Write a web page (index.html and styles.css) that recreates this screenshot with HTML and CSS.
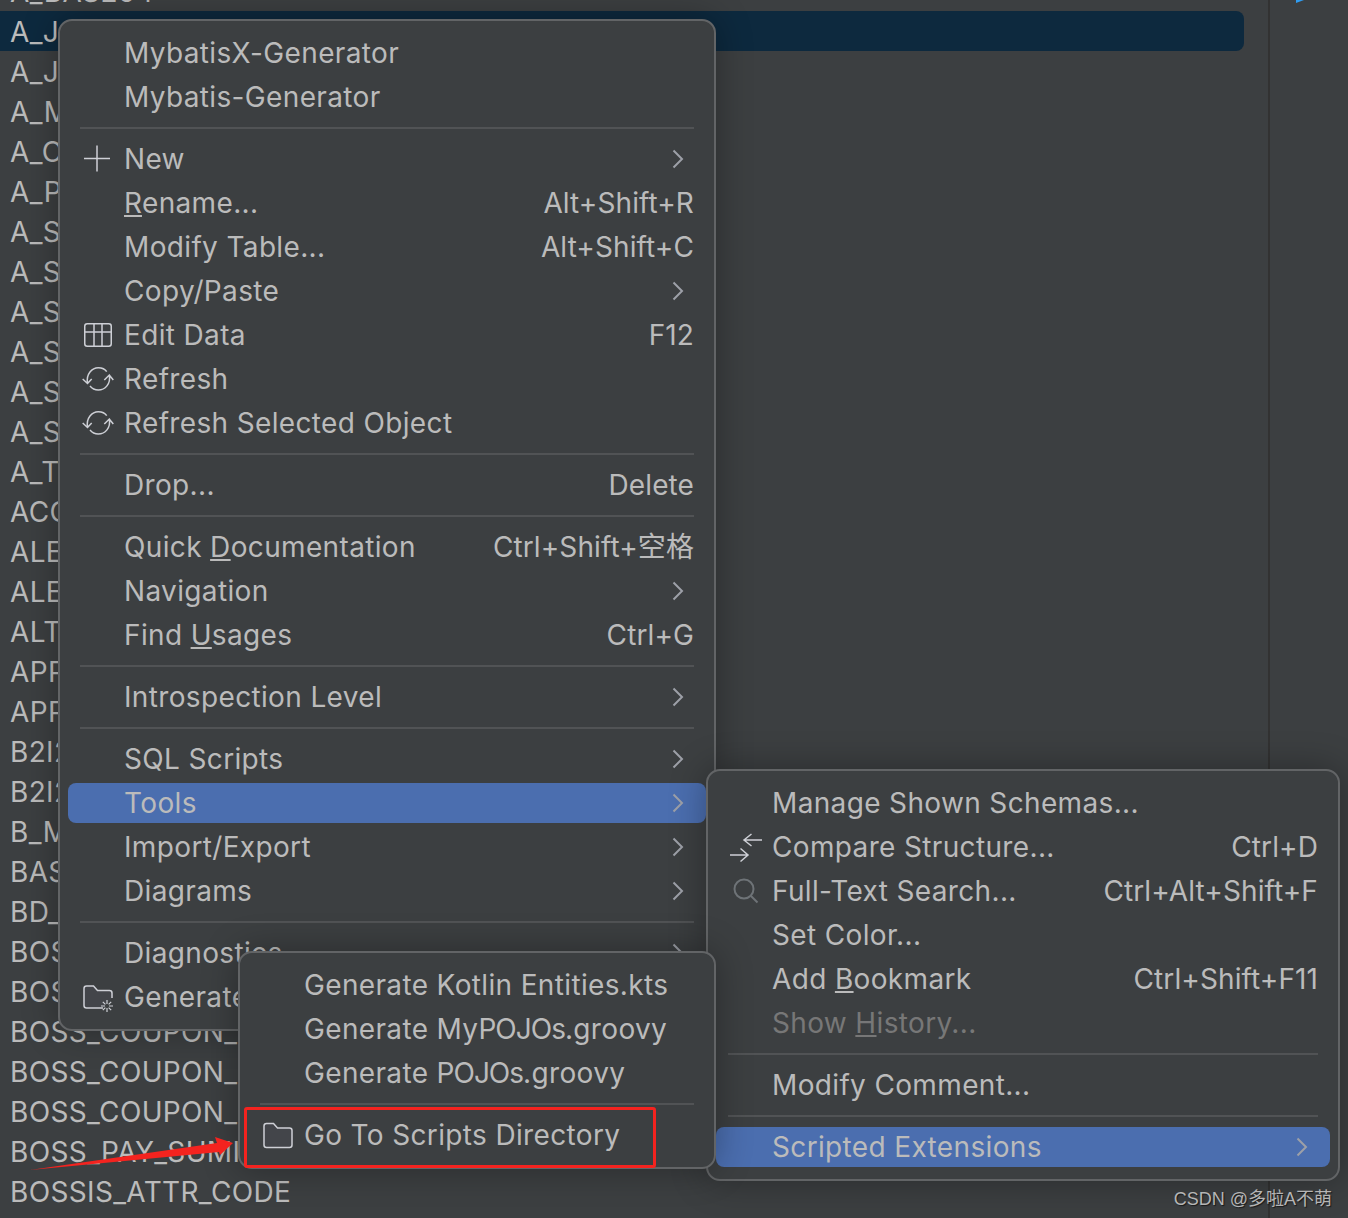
FILE: index.html
```html
<!DOCTYPE html>
<html lang="en">
<head>
<meta charset="utf-8">
<title>Database tools context menu</title>
<link rel="stylesheet" href="styles.css">
</head>
<body>
<svg class="defs" width="0" height="0" aria-hidden="true">
  <symbol id="chev" viewBox="0 0 12 20"><path d="M1.5 1.5 10 10 1.5 18.5"/></symbol>
  <symbol id="refresh" viewBox="0 0 44 44"><path d="M7.5 26C6 17 12 10.7 18.3 10.7c3.7 0 6.7 1.3 8.4 4M2.7 22l4.8 4.5L11.7 22M29.3 18c1.7 9-4.3 15-11 15-3.800 0-6.300-1.500-8.300-4M24.300 23l5-5 4 5"/></symbol>
  <symbol id="folder" viewBox="0 0 44 44"><path class="ff" d="M6.500 34.500a2.500 2.500 0 0 1-2.500-2.500V13a2.500 2.500 0 0 1 2.500-2.500h7l4 4.500h12a2.500 2.500 0 0 1 2.500 2.500V32a2.500 2.500 0 0 1-2.500 2.500z"/></symbol>
</svg>

<main class="tree">
  <div class="tree-row">A_BAS264</div>
  <div class="tree-row selected">A_JOB</div>
  <div class="tree-row">A_JOB</div>
  <div class="tree-row">A_M</div>
  <div class="tree-row">A_O</div>
  <div class="tree-row">A_P</div>
  <div class="tree-row">A_S</div>
  <div class="tree-row">A_S</div>
  <div class="tree-row">A_S</div>
  <div class="tree-row">A_S</div>
  <div class="tree-row">A_S</div>
  <div class="tree-row">A_S</div>
  <div class="tree-row">A_T</div>
  <div class="tree-row">ACC</div>
  <div class="tree-row">ALE</div>
  <div class="tree-row">ALE</div>
  <div class="tree-row">ALT</div>
  <div class="tree-row">APP</div>
  <div class="tree-row">APP</div>
  <div class="tree-row">B2I2</div>
  <div class="tree-row">B2I2</div>
  <div class="tree-row">B_M</div>
  <div class="tree-row">BAS</div>
  <div class="tree-row">BD_</div>
  <div class="tree-row">BOS</div>
  <div class="tree-row">BOS</div>
  <div class="tree-row">BOSS_COUPON_</div>
  <div class="tree-row">BOSS_COUPON_</div>
  <div class="tree-row">BOSS_COUPON_</div>
  <div class="tree-row">BOSS_PAY_SUMI</div>
  <div class="tree-row">BOSSIS_ATTR_CODE</div>
</main>
<aside class="side-panel">
  <svg class="side-tip" width="10" height="4" viewBox="0 0 10 4"><path d="M0 3 8 0H3L0 0z"/></svg>
</aside>

<nav class="menu menu-main">
  <div class="item"><span class="slot"></span><span class="label">MybatisX-Generator</span></div>
  <div class="item"><span class="slot"></span><span class="label">Mybatis-Generator</span></div>
  <hr class="sep">
  <div class="item"><svg class="slot" viewBox="0 0 44 44"><path d="M4 21.500h26M17 8.500v26"/></svg><span class="label">New</span><svg class="chev"><use href="#chev"/></svg></div>
  <div class="item"><span class="slot"></span><span class="label"><u>R</u>ename...</span><span class="keys">Alt+Shift+R</span></div>
  <div class="item"><span class="slot"></span><span class="label">Modify Table...</span><span class="keys">Alt+Shift+C</span></div>
  <div class="item"><span class="slot"></span><span class="label">Copy/Paste</span><svg class="chev"><use href="#chev"/></svg></div>
  <div class="item"><svg class="slot" viewBox="0 0 44 44"><rect x="4.750" y="10.750" width="26.500" height="22.500" rx="2.500"/><path d="M4.750 19h26.500M14 11v22M22 11v22"/></svg><span class="label">Edit Data</span><span class="keys">F12</span></div>
  <div class="item"><svg class="slot"><use href="#refresh"/></svg><span class="label">Refresh</span></div>
  <div class="item"><svg class="slot"><use href="#refresh"/></svg><span class="label">Refresh Selected Object</span></div>
  <hr class="sep">
  <div class="item"><span class="slot"></span><span class="label">Drop...</span><span class="keys">Delete</span></div>
  <hr class="sep">
  <div class="item"><span class="slot"></span><span class="label">Quick <u>D</u>ocumentation</span><span class="keys">Ctrl+Shift+空格</span></div>
  <div class="item"><span class="slot"></span><span class="label">Navigation</span><svg class="chev"><use href="#chev"/></svg></div>
  <div class="item"><span class="slot"></span><span class="label">Find <u>U</u>sages</span><span class="keys">Ctrl+G</span></div>
  <hr class="sep">
  <div class="item"><span class="slot"></span><span class="label">Introspection Level</span><svg class="chev"><use href="#chev"/></svg></div>
  <hr class="sep">
  <div class="item"><span class="slot"></span><span class="label">SQL Scripts</span><svg class="chev"><use href="#chev"/></svg></div>
  <div class="item active"><span class="slot"></span><span class="label">Tools</span><svg class="chev"><use href="#chev"/></svg></div>
  <div class="item"><span class="slot"></span><span class="label">Import/Export</span><svg class="chev"><use href="#chev"/></svg></div>
  <div class="item"><span class="slot"></span><span class="label">Diagrams</span><svg class="chev"><use href="#chev"/></svg></div>
  <hr class="sep">
  <div class="item"><span class="slot"></span><span class="label">Diagnostics</span><svg class="chev"><use href="#chev"/></svg></div>
  <div class="item"><svg class="slot" viewBox="0 0 44 44"><path class="ff" d="M23 33H6.500A2.500 2.500 0 0 1 4 30.500V13.500A2.500 2.500 0 0 1 6.500 11h7l4 4.500h12a2.500 2.500 0 0 1 2.500 2.500v5"/><path class="thin" d="M27 25v4M27 33v4M21 31h4M29 31h4M22.800 26.800l2.600 2.600M28.600 32.600l2.600 2.600M31.200 26.800l-2.600 2.600M25.400 32.600l-2.600 2.600"/></svg><span class="label">Generate</span></div>
</nav>

<nav class="menu menu-tools">
  <div class="item"><span class="slot"></span><span class="label">Manage Shown Schemas...</span></div>
  <div class="item"><svg class="slot" viewBox="0 0 44 44"><path d="M34 15H16M23.500 9 16 15l7.500 6M2 30h18M12.500 23.500 20 30l-7.500 6.500"/></svg><span class="label">Compare Structure...</span><span class="keys">Ctrl+D</span></div>
  <div class="item"><svg class="slot muted" viewBox="0 0 44 44"><circle cx="16" cy="20" r="9.500"/><path d="M23 27l6.500 6.500"/></svg><span class="label">Full-Text Search...</span><span class="keys">Ctrl+Alt+Shift+F</span></div>
  <div class="item"><span class="slot"></span><span class="label">Set Color...</span></div>
  <div class="item"><span class="slot"></span><span class="label">Add <u>B</u>ookmark</span><span class="keys">Ctrl+Shift+F11</span></div>
  <div class="item disabled"><span class="slot"></span><span class="label">Show <u>H</u>istory...</span></div>
  <hr class="sep">
  <div class="item"><span class="slot"></span><span class="label">Modify Comment...</span></div>
  <hr class="sep">
  <div class="item active"><span class="slot"></span><span class="label">Scripted Extensions</span><svg class="chev"><use href="#chev"/></svg></div>
</nav>

<nav class="menu menu-scripts">
  <div class="item"><span class="slot"></span><span class="label">Generate Kotlin Entities.kts</span></div>
  <div class="item"><span class="slot"></span><span class="label">Generate My<span class="tight">POJOs</span>.groovy</span></div>
  <div class="item"><span class="slot"></span><span class="label">Generate <span class="tight">POJOs</span>.groovy</span></div>
  <hr class="sep">
  <div class="item"><svg class="slot"><use href="#folder"/></svg><span class="label">Go To Scripts Directory</span></div>
</nav>

<div class="callout-box"></div>
<svg class="callout-arrow" width="210" height="40" viewBox="0 0 210 40"><path d="M1 34 188 7l-2-6 18 6-13 12-1-3z"/></svg>
<div class="watermark">CSDN @多啦A不萌</div>
</body>
</html>
```
FILE: styles.css
```css
* { box-sizing: border-box; }
html, body { margin: 0; height: 1218px; overflow: hidden; }
body {
  position: relative;
  display: flex;
  background: #3c3f41;
  color: #bbbbbb;
  font-family: Inter, "Noto Sans CJK SC", sans-serif;
  font-size: 28px;
  letter-spacing: .35px;
}
.defs { position: absolute; }
.tree {
  width: 1268px;
  height: 1218px;
  padding: 0 24px 7px 0;
  display: flex;
  flex-direction: column;
  justify-content: flex-end;
  flex-shrink: 0;
  overflow: hidden;
}
.tree-row {
  flex: 0 0 40px;
  height: 40px;
  line-height: 38px;
  padding: 2px 0 0 10px;
  white-space: nowrap;
}
.tree-row.selected { background: #0d293e; border-radius: 0 8px 8px 0; }
.side-panel {
  flex: 1;
  position: relative;
  border-left: 2px solid #323232;
}
.side-tip { position: absolute; left: 26px; top: 0; fill: #2f9cf0; }
.menu {
  position: absolute;
  background: #3c3f41;
  border: 2px solid #626466;
  border-radius: 14px;
  padding: 10px 8px;
  box-shadow: 0 0 36px rgba(0, 0, 0, .32);
}
.menu-main { left: 58px; top: 19px; width: 658px; height: 1012px; }
.menu-tools { left: 706px; top: 769px; width: 634px; height: 412px; }
.menu-scripts { left: 238px; top: 951px; width: 478px; height: 218px; }
.item {
  height: 44px;
  display: flex;
  align-items: center;
  padding: 0 12px;
  position: relative;
  white-space: nowrap;
  line-height: 40px;
}
.item.active::before {
  content: "";
  position: absolute;
  inset: 2px 0;
  background: #4b6eaf;
  border-radius: 8px;
}
.item > * { position: relative; }
.item.disabled { color: #777777; }
.slot {
  flex: 0 0 44px;
  width: 44px;
  height: 44px;
  fill: none;
  stroke: #ced0d6;
  stroke-width: 1.500;
}
.slot.muted { stroke: #6e7377; stroke-width: 2; }
.ff { fill: #43454a; stroke: #ced0d6; }
.thin { stroke-width: 1.200; }
.label { flex: 1; }
.keys { flex: none; letter-spacing: .1px; }
.tight { letter-spacing: -1px; }
.label u { text-decoration-thickness: 2px; text-underline-offset: 2px; text-decoration-skip-ink: none; }
.chev {
  flex: 0 0 12px;
  width: 12px;
  height: 20px;
  margin-right: 10px;
  fill: none;
  stroke: #9da0a8;
  stroke-width: 2;
}
.sep {
  height: 2px;
  margin: 8px 12px;
  border: 0;
  background: #515355;
}
.callout-box {
  position: absolute;
  left: 244px;
  top: 1107px;
  width: 412px;
  height: 61px;
  border: 3px solid #f4231f;
  border-radius: 3px;
}
.callout-arrow { position: absolute; left: 29px; top: 1136px; fill: #f4231f; }
.watermark {
  position: absolute;
  right: 16px;
  bottom: 8px;
  font-family: "Liberation Sans", "Noto Sans CJK SC", sans-serif;
  font-size: 18px;
  letter-spacing: 0;
  line-height: 22px;
  color: #b5b5b5;
  text-shadow: 1px 1px 1px rgba(0, 0, 0, .6);
}
```
